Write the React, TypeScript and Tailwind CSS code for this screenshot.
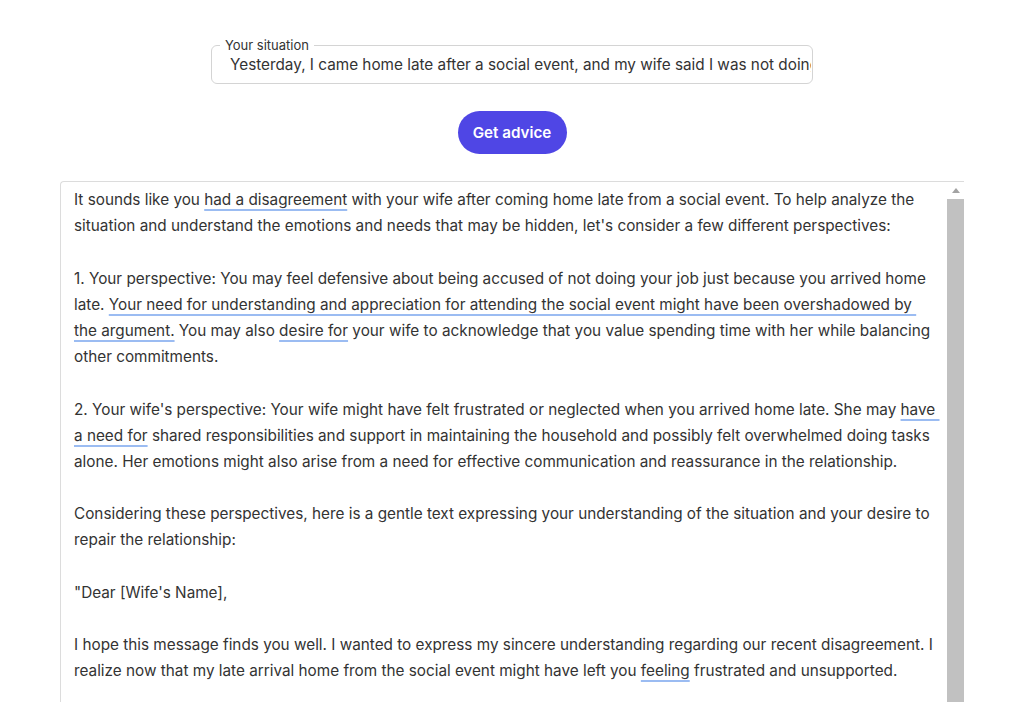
import React from 'react';

type Seg = string | { u: string };

const lines: Seg[][] = [
  ['It sounds like you ', { u: 'had a disagreement' }, ' with your wife after coming home late from a social event. To help analyze the'],
  ["situation and understand the emotions and needs that may be hidden, let's consider a few different perspectives:"],
  [],
  ['1. Your perspective: You may feel defensive about being accused of not doing your job just because you arrived home'],
  ['late. ', { u: 'Your need for understanding and appreciation for attending the social event might have been overshadowed by ' }],
  [{ u: 'the argument.' }, ' You may also ', { u: 'desire for' }, ' your wife to acknowledge that you value spending time with her while balancing'],
  ['other commitments.'],
  [],
  ["2. Your wife's perspective: Your wife might have felt frustrated or neglected when you arrived home late. She may ", { u: 'have ' }],
  [{ u: 'a need for' }, ' shared responsibilities and support in maintaining the household and possibly felt overwhelmed doing tasks'],
  ['alone. Her emotions might also arise from a need for effective communication and reassurance in the relationship.'],
  [],
  ['Considering these perspectives, here is a gentle text expressing your understanding of the situation and your desire to'],
  ['repair the relationship:'],
  [],
  ['"Dear [Wife\'s Name],'],
  [],
  ['I hope this message finds you well. I wanted to express my sincere understanding regarding our recent disagreement. I'],
  ['realize now that my late arrival home from the social event might have left you ', { u: 'feeling' }, ' frustrated and unsupported.'],
  [],
  ['I want you to know that I value our partnership and the effort you put into our home.'],
];

function Line({ segs }: { segs: Seg[] }) {
  if (segs.length === 0) return <div className="h-[26.2px]" />;
  return (
    <div className="h-[26.2px] whitespace-pre">
      {segs.map((s, i) =>
        typeof s === 'string' ? (
          <span key={i}>{s}</span>
        ) : (
          <span key={i} className="underline decoration-[#9bbcf2] decoration-2 underline-offset-[4px]">
            {s.u}
          </span>
        ),
      )}
    </div>
  );
}

export default function App() {
  return (
    <div className="h-[702px] overflow-hidden bg-white font-['Inter',sans-serif] text-[#333]">
      <div className="flex flex-col items-center pt-[38px]">
        <fieldset className="h-[46px] w-[602px] min-w-0 rounded-[6px] border border-[#d4d4d4] pb-0 pl-[18px] pr-[1px]">
          <legend className="ml-[-10px] px-[5px] text-[13px] leading-[14px] text-[#333]">Your situation</legend>
          <div className="mt-[3px] overflow-hidden whitespace-nowrap text-[15.3px] leading-[20px]">
            Yesterday, I came home late after a social event, and my wife said I was not doing my job
          </div>
        </fieldset>

        <button
          type="button"
          className="mt-[27px] h-[43px] w-[109px] rounded-full bg-[#4f46e5] pt-[1px] text-[15.2px] font-semibold text-white"
        >
          Get advice
        </button>

        <div className="mt-[27px] flex h-[560px] w-[904px] overflow-hidden rounded-tl-[4px] border border-r-0 border-[#dcdcdc]">
          <div className="min-w-0 flex-1 overflow-hidden py-[5px] pl-[13px] text-[15.3px] leading-[26.2px]">
            {lines.map((l, i) => (
              <Line key={i} segs={l} />
            ))}
          </div>
          <div className="flex w-[17px] shrink-0 flex-col bg-[#f1f1f1]">
            <div className="flex h-[17px] items-center justify-center bg-white">
              <svg width="8" height="5" viewBox="0 0 8 5">
                <path d="M4 0L8 5H0Z" fill="#a3a3a3" />
              </svg>
            </div>
            <div className="flex-1 bg-[#c1c1c1]" />
          </div>
        </div>
      </div>
    </div>
  );
}
